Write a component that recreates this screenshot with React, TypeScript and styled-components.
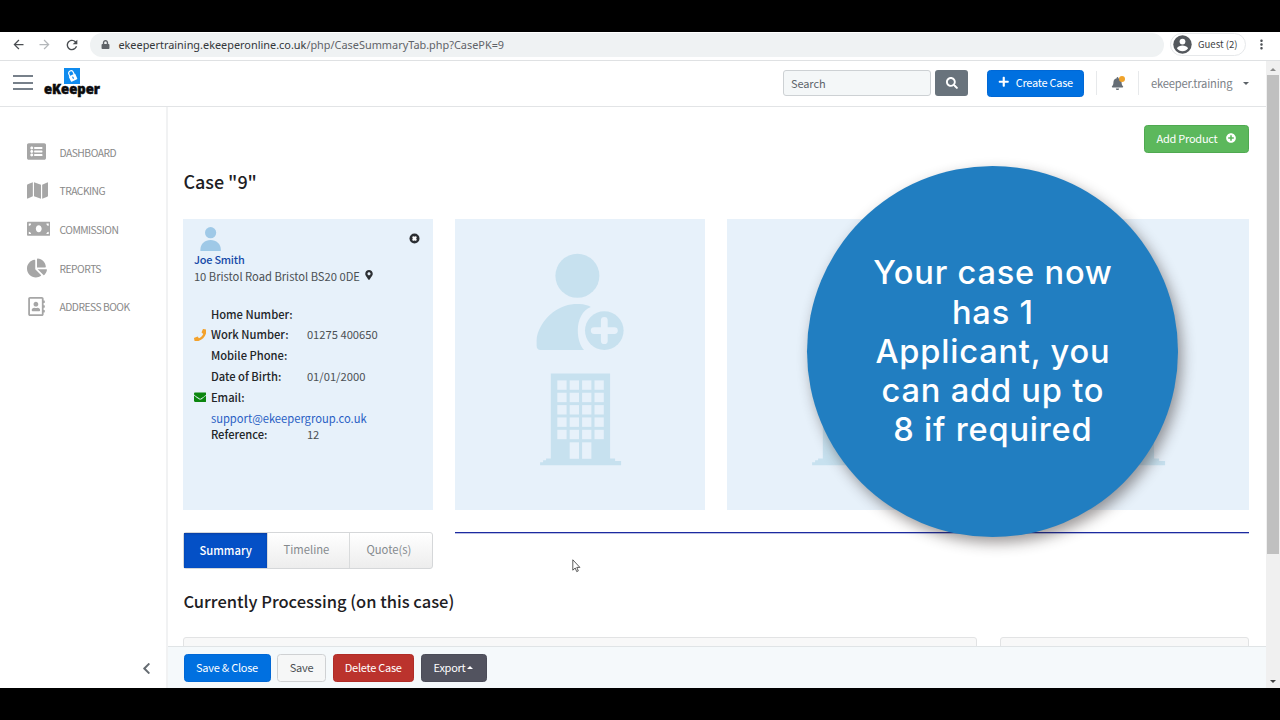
import React from 'react';
import styled, { createGlobalStyle, css } from 'styled-components';
import {
  FaListAlt, FaMap, FaMoneyBill, FaChartPie, FaRegAddressBook, FaSearch, FaPlus, FaBell,
  FaPlusCircle, FaMapMarkerAlt, FaPhone, FaEnvelope, FaChevronLeft, FaLock,
} from 'react-icons/fa';
import { MdArrowBack, MdArrowForward, MdRefresh, MdMoreVert } from 'react-icons/md';

const sans = '"Noto Sans CJK SC", "Noto Sans", sans-serif';

const GlobalStyle = createGlobalStyle`
  *, *::before, *::after { box-sizing: border-box; }
  body { margin: 0; background: #000; font-family: ${sans}; }
  svg { display: block; flex: none; }
`;

const Screen = styled.div`
  position: relative;
  width: 1280px;
  height: 720px;
  padding: 32px 0;
  background: #000;
  overflow: hidden;
  display: flex;
  flex-direction: column;
`;

/* Browser toolbar */
const BrowserBar = styled.div`
  flex: none;
  height: 29px;
  padding: 0 11px 3px 10.5px;
  display: flex;
  align-items: center;
  background: #fff;
  border-bottom: 1px solid #dfe1e3;
  color: #4d5156;
`;
const NavIcon = styled.span<{ $muted?: boolean }>`
  width: 26.8px;
  color: ${(p) => (p.$muted ? '#b4b7ba' : '#4a4e52')};
`;
const AddressBar = styled.div`
  width: 1074px;
  height: 24px;
  margin-left: -1px;
  padding-left: 11px;
  border-radius: 12px;
  background: #eff2f3;
  display: flex;
  align-items: center;
  gap: 8.5px;
  color: #5f6368;
  font: 10.9px/16px "Noto Sans", sans-serif;
  white-space: nowrap;
`;
const Host = styled.span`color: #34373a;`;
const Profile = styled.div`
  width: 76px;
  height: 23px;
  margin-left: 6px;
  padding-left: 2px;
  border: 1px solid #e6e8ea;
  border-radius: 12px;
  display: flex;
  align-items: center;
  gap: 6px;
  font-size: 9.6px;
  line-height: 14px;
  color: #3c4043;
  white-space: nowrap;
  & > span { margin-top: -2px; }
`;
const Kebab = styled.span`margin-left: 8px;`;

/* App shell */
const Viewport = styled.div`flex: 1; min-height: 0; display: flex; background: #fff;`;
const Page = styled.div`width: 1266px; display: flex; flex-direction: column;`;
const Header = styled.header`
  flex: none;
  height: 46px;
  padding: 0 16px 1px 12.5px;
  display: flex;
  align-items: center;
  border-bottom: 1px solid #e2e4e6;
`;
const Burger = styled.div`
  width: 20px;
  height: 15px;
  margin-bottom: 1px;
  display: flex;
  flex-direction: column;
  justify-content: space-between;
  &::before, &::after { content: ''; }
  &::before, &::after, & > i { height: 2px; background: #77808a; }
`;
const Logo = styled.div`
  width: 57px;
  margin: 0 auto 0 11px;
  display: flex;
  flex-direction: column;
  align-items: center;
`;
const LogoText = styled.span`
  margin-top: -4px;
  font: 900 13.1px/18px "Noto Sans", sans-serif;
  color: #0b0b0d;
  -webkit-text-stroke: 0.5px #0b0b0d;
`;
const SearchBox = styled.div`
  width: 148px;
  height: 26px;
  padding-left: 7px;
  border: 1px solid #cdd1d4;
  border-radius: 3px;
  background: #f4f7f8;
  font-size: 11px;
  letter-spacing: -0.1px;
  line-height: 24px;
  color: #5d646a;
`;
const SearchButton = styled.div`
  width: 33px;
  height: 26px;
  margin: 0 19px 0 4px;
  border-radius: 3px;
  background: #69737c;
  color: #fff;
  display: flex;
  align-items: center;
  justify-content: center;
`;
const HeaderGap = styled.span`width: 12px;`;
const HeaderRule = styled.span`width: 1px; height: 24px; background: #e7e9eb;`;
const Bell = styled.div`
  position: relative;
  width: 41px;
  display: flex;
  justify-content: center;
  color: #656d75;
`;
const BellDot = styled.span`
  position: absolute;
  left: 22px;
  top: -1px;
  width: 6px;
  height: 6px;
  border-radius: 50%;
  background: #f0a32b;
`;
const UserMenu = styled.div`
  width: 98px;
  margin: 1px 1px 0 12px;
  display: flex;
  align-items: center;
  justify-content: space-between;
  font-size: 11.2px;
  letter-spacing: -0.2px;
  line-height: 17px;
  color: #7b8187;
`;
const Caret = styled.i<{ $up?: boolean; $color?: string; $size?: number }>`
  display: block;
  width: 0;
  height: 0;
  border: ${(p) => p.$size ?? 3.5}px solid transparent;
  ${(p) =>
    p.$up
      ? css`border-top-width: 0; border-bottom-color: ${p.$color ?? '#fff'};`
      : css`border-bottom-width: 0; border-top-color: ${p.$color ?? '#5c6268'};`}
`;

type Tone = 'primary' | 'light' | 'danger' | 'dark' | 'success';
const tones = {
  primary: css`background: #0070e0; border-color: #0068d6; color: #fff;`,
  light: css`background: #f6f7f7; border-color: #cfd1d3; color: #4b4f53;`,
  danger: css`background: #bb332d; border-color: #b02c27; color: #fff;`,
  dark: css`background: #52535f; border-color: #4b4c58; color: #fff;`,
  success: css`background: #5cb85c; border-color: #4fa950; color: #fff;`,
};
const Button = styled.button<{ $tone: Tone; $width: number; $height?: number }>`
  width: ${(p) => p.$width}px;
  height: ${(p) => p.$height ?? 28}px;
  padding: 0 0 2px;
  border: 1px solid;
  border-radius: 3.5px;
  display: flex;
  align-items: center;
  justify-content: center;
  font: 400 11px/16px ${sans};
  letter-spacing: -0.26px;
  white-space: nowrap;
  ${(p) => tones[p.$tone]}
`;
const IconBefore = styled.span`margin-right: 6px;`;
const IconAfter = styled.span`margin-left: 9px;`;
const CaretAfter = styled.span`margin: 1px 0 0 2px;`;

const Body = styled.div`flex: 1; min-height: 0; display: flex;`;
const Sidebar = styled.nav`
  width: 168px;
  padding: 26.6px 0 0 26.5px;
  border-right: 2px solid #f1f2f3;
  display: flex;
  flex-direction: column;
`;
const NavItem = styled.a`
  height: 38.6px;
  display: flex;
  align-items: center;
  font-size: 10.3px;
  letter-spacing: -0.5px;
  line-height: 16px;
  color: #898989;
`;
const NavGlyph = styled.span`width: 33px; margin-top: -2px; color: #a6a6a6;`;
const Collapse = styled.span`margin: auto 0 13px 113px; color: #666c72;`;

const Main = styled.main`flex: 1; min-width: 0; display: flex; flex-direction: column;`;
const Content = styled.section`
  flex: 1;
  min-height: 0;
  overflow: hidden;
  padding: 18px 17px 0 15.4px;
  display: flex;
  flex-direction: column;
`;
const Actions = styled.div`flex: none; display: flex; justify-content: flex-end;`;
const Title = styled.h1`
  flex: none;
  margin: 15.4px 0 24.6px;
  font-size: 17.95px;
  font-weight: 500;
  line-height: 26px;
  color: #1d2023;
`;
const CardGrid = styled.div`
  flex: none;
  display: grid;
  grid-template-columns: repeat(4, 1fr);
  column-gap: 22.5px;
`;
const Card = styled.article`
  height: 291px;
  background: #e7f1fa;
`;
const ApplicantCard = styled(Card)`
  padding: 8px 13px 0 10.5px;
  font-size: 11.2px;
  line-height: 16.8px;
  color: #4b5054;
`;
const CardTop = styled.div`
  height: 24px;
  padding-left: 6px;
  display: flex;
  justify-content: space-between;
`;
const CloseMark = styled.svg`margin-top: 6px;`;
const Name = styled.div`font-weight: 500; font-size: 10.9px; letter-spacing: -0.2px; color: #1549a8;`;
const Address = styled.div`
  display: flex;
  gap: 4px;
  margin: 0.4px 0 18.6px;
  & > svg { margin-top: 2px; color: #2d3033; }
`;
const Field = styled.div<{ $compact?: boolean }>`
  height: ${(p) => (p.$compact ? 16.8 : 20.8)}px;
  display: grid;
  grid-template-columns: 17px 96px 1fr;
  align-items: center;
`;
const Label = styled.span`grid-column: 2; font-weight: 500; color: #222528;`;
const Value = styled.span`grid-column: 3;`;
const Mail = styled.a`display: block; padding: 2px 0 0 17px; color: #2a5fc4;`;
const EmptyCard = styled(Card)`
  padding: 33px 0 0 80.5px;
  display: flex;
  flex-direction: column;
  gap: 20px;
  & > svg + svg { margin-left: 4px; }
`;

const TabRow = styled.div`
  flex: none;
  margin-top: 22px;
  display: grid;
  grid-template-columns: 249.5px 1fr;
  column-gap: 22.5px;
  align-items: start;
`;
const Tabs = styled.div`
  height: 37px;
  display: grid;
  grid-template-columns: 82.5px 82px 1fr;
  border: 1px solid #d5d7d9;
  border-radius: 3px;
  background: linear-gradient(#fff, #ededed);
`;
const Tab = styled.div<{ $active?: boolean }>`
  padding-right: 4px;
  font-size: 11.25px;
  line-height: 32px;
  text-align: center;
  color: #858a8e;
  & + & { border-left: 1px solid #d9dbdc; }
  & + &:nth-child(2) { padding-right: 1px; border-left: 0; }
  ${(p) =>
    p.$active &&
    css`
      height: 35px;
      padding-right: 0;
      background: #0450c6;
      color: #fff;
      font-weight: 500;
      line-height: 35px;
      box-shadow: inset 0 1px 2px #0b3da0;
    `}
`;
const TabLine = styled.hr`
  width: 100%;
  height: 1px;
  margin: 0;
  border: 0;
  background: #1c2aa0;
  box-shadow: 0 1px rgba(28, 42, 160, 0.3);
`;
const Heading = styled.h2`
  flex: none;
  margin: 20px 0 23px;
  font-size: 16.5px;
  font-weight: 500;
  line-height: 25px;
  color: #1d2023;
`;
const Panels = styled.div`
  flex: none;
  display: grid;
  grid-template-columns: 793.5px 1fr;
  column-gap: 23.2px;
`;
const Panel = styled.div`
  height: 60px;
  border: 1px solid #e2e3e4;
  border-radius: 3px;
  background: #f8f8f8;
`;
const FooterBar = styled.footer`
  flex: none;
  height: 42px;
  padding: 7px 0 0 15.5px;
  border-top: 1px solid #e0e4e6;
  background: #f5f9fb;
  display: flex;
  gap: 6.5px;
`;

const Scrollbar = styled.div`
  width: 14px;
  padding: 7px 1px 5px;
  background: #f0f0f0;
  display: flex;
  flex-direction: column;
  align-items: center;
`;
const Thumb = styled.div`width: 12px; height: 479px; margin: 4px 0 auto; background: #c0c0c0;`;

const Bubble = styled.div`
  position: absolute;
  left: 807.4px;
  top: 166px;
  width: 371px;
  height: 371px;
  border-radius: 50%;
  background: #217ec1;
  box-shadow: 4px 6px 14px rgba(40, 30, 30, 0.45);
  display: flex;
  align-items: center;
  justify-content: center;
  text-align: center;
  font: 500 32.6px/39.3px Inter, sans-serif;
  letter-spacing: 0.8px;
  color: #fff;
`;
const Pointer = styled.svg`position: absolute; left: 572px; top: 559px;`;

const GuestAvatar = () => (
  <svg width="19" height="19" viewBox="0 0 19 19">
    <circle cx="9.5" cy="9.5" r="9.2" fill="#54585d" />
    <circle cx="9.5" cy="6.600" r="2.900" fill="#fff" />
    <path d="M3.900 13.300c1-1.900 3.500-2.700 5.600-2.700s4.600.8 5.600 2.700a6.700 6.700 0 0 1-11.200 0z" fill="#fff" />
  </svg>
);

const PersonIcon = () => (
  <svg width="22" height="25" viewBox="200 227 22 25" fill="#9fc9e7">
    <circle cx="210.6" cy="232.7" r="5.6" />
    <path d="M200.4 251v-1.500c0-5.600 4.400-9.600 10.200-9.600s10.200 4 10.200 9.600v1.500z" />
  </svg>
);

const CloseIcon = () => (
  <CloseMark width="11" height="11" viewBox="0 0 11 11">
    <circle cx="5.500" cy="5.500" r="5" fill="#2b2e32" />
    <path d="M4.400 4.400l2.200 2.200M6.600 4.400l-2.200 2.200" stroke="#fff" strokeWidth="2.200" strokeLinecap="round" />
  </CloseMark>
);

const AddPersonIcon = () => (
  <svg width="90" height="100" viewBox="536 252 90 100" fill="#c7e1ef">
    <circle cx="577.4" cy="275.8" r="22" />
    <path d="M540.5 350c-2.600-.1-3.900-1.700-3.900-4.600v-5c0-9 6.500-20.500 16-28 8.500-6.500 18-8.900 27-8.400 4.500.2 8.600 1.200 11.200 3-8.500 3.500-13 12.500-13 23.500 0 8 2.200 15 6.200 19.500z" />
    <circle cx="604.3" cy="330.6" r="19.3" />
    <path d="M604.3 320.500v20.200M594.200 330.600h20.200" stroke="#e7f1fa" strokeWidth="6.800" strokeLinecap="round" />
  </svg>
);

const BuildingIcon = () => (
  <svg width="82" height="94" viewBox="540 372 82 94" fill="#c7e1ef">
    <path d="M550.800 373.600h59.300v84.900h5v2.500h6v4.300h-81v-3h3v-2h3v-1.800h4.700z" />
    <g fill="#e7f1fa">
      {[0, 1, 2, 3, 4].map((row) =>
        [0, 1, 2, 3].map((col) => (
          <rect key={`${row}-${col}`} x={557.3 + col * 12.4} y={380.4 + row * 12.35} width="9.300" height="9.400" />
        )),
      )}
      <rect x="569.7" y="442.300" width="9.300" height="16.500" />
      <rect x="582.1" y="442.300" width="9.300" height="16.500" />
    </g>
  </svg>
);

/* Blue tile with a tilted padlock */
const LogoMark = () => (
  <svg width="16" height="16" viewBox="0 0 16 16">
    <rect width="16" height="16" fill="#0f8bee" />
    <g transform="rotate(-24 8 8)">
      <rect x="4.800" y="7" width="7" height="6" rx=".6" fill="#fff" />
      <path d="M5.900 7.200V5a2.400 2.400 0 0 1 4.800 0v2.200" fill="none" stroke="#fff" strokeWidth="1.200" />
      <rect x="7.700" y="8.800" width="1.200" height="2.400" rx=".6" fill="#0f8bee" />
    </g>
  </svg>
);

const navItems = [
  { label: 'DASHBOARD', icon: <FaListAlt size={19} /> },
  { label: 'TRACKING', icon: <FaMap size={21} /> },
  { label: 'COMMISSION', icon: <FaMoneyBill size={23.5} /> },
  { label: 'REPORTS', icon: <FaChartPie size={20} /> },
  { label: 'ADDRESS BOOK', icon: <FaRegAddressBook size={19} /> },
];

const fields = [
  { label: 'Home Number:', value: '' },
  { label: 'Work Number:', value: '01275 400650', icon: <FaPhone size={12.5} color="#f3a22c" /> },
  { label: 'Mobile Phone:', value: '' },
  { label: 'Date of Birth:', value: '01/01/2000' },
  { label: 'Email:', value: '', icon: <FaEnvelope size={12.5} color="#0c860f" /> },
];

export default function App() {
  return (
    <>
      <GlobalStyle />
      <Screen>
        <BrowserBar>
          <NavIcon><MdArrowBack size={15} /></NavIcon>
          <NavIcon $muted><MdArrowForward size={15} /></NavIcon>
          <NavIcon><MdRefresh size={16} /></NavIcon>
          <AddressBar>
            <FaLock size={9} />
            <span><Host>ekeepertraining.ekeeperonline.co.uk</Host>/php/CaseSummaryTab.php?CasePK=9</span>
          </AddressBar>
          <Profile><GuestAvatar /><span>Guest (2)</span></Profile>
          <Kebab><MdMoreVert size={15} /></Kebab>
        </BrowserBar>

        <Viewport>
          <Page>
            <Header>
              <Burger><i /></Burger>
              <Logo><LogoMark /><LogoText>eKeeper</LogoText></Logo>
              <SearchBox>Search</SearchBox>
              <SearchButton><FaSearch size={12} /></SearchButton>
              <Button $tone="primary" $width={97} $height={27}>
                <IconBefore><FaPlus size={11.5} /></IconBefore>Create Case
              </Button>
              <HeaderGap />
              <HeaderRule />
              <Bell><FaBell size={13} /><BellDot /></Bell>
              <HeaderRule />
              <UserMenu>ekeeper.training<Caret /></UserMenu>
            </Header>

            <Body>
              <Sidebar>
                {navItems.map((item) => (
                  <NavItem key={item.label}><NavGlyph>{item.icon}</NavGlyph>{item.label}</NavItem>
                ))}
                <Collapse><FaChevronLeft size={13} /></Collapse>
              </Sidebar>

              <Main>
                <Content>
                  <Actions>
                    <Button $tone="success" $width={105}>
                      Add Product<IconAfter><FaPlusCircle size={10} /></IconAfter>
                    </Button>
                  </Actions>
                  <Title>Case "9"</Title>
                  <CardGrid>
                    <ApplicantCard>
                      <CardTop>
                        <PersonIcon />
                        <CloseIcon />
                      </CardTop>
                      <Name>Joe Smith</Name>
                      <Address>10 Bristol Road Bristol BS20 0DE<FaMapMarkerAlt size={10} /></Address>
                      {fields.map((f) => (
                        <Field key={f.label}>{f.icon}<Label>{f.label}</Label><Value>{f.value}</Value></Field>
                      ))}
                      <Mail>support@ekeepergroup.co.uk</Mail>
                      <Field $compact><Label>Reference:</Label><Value>12</Value></Field>
                    </ApplicantCard>
                    {[2, 3, 4].map((slot) => (
                      <EmptyCard key={slot}><AddPersonIcon /><BuildingIcon /></EmptyCard>
                    ))}
                  </CardGrid>
                  <TabRow>
                    <Tabs>
                      <Tab $active>Summary</Tab>
                      <Tab>Timeline</Tab>
                      <Tab>Quote(s)</Tab>
                    </Tabs>
                    <TabLine />
                  </TabRow>
                  <Heading>Currently Processing (on this case)</Heading>
                  <Panels><Panel /><Panel /></Panels>
                </Content>
                <FooterBar>
                  <Button $tone="primary" $width={87}>Save &amp; Close</Button>
                  <Button $tone="light" $width={49}>Save</Button>
                  <Button $tone="danger" $width={81.5}>Delete Case</Button>
                  <Button $tone="dark" $width={66}>Export<CaretAfter><Caret $up $size={3} /></CaretAfter></Button>
                </FooterBar>
              </Main>
            </Body>
          </Page>
          <Scrollbar>
            <Caret $up $size={3} $color="#8b8b8b" />
            <Thumb />
            <Caret $size={3} $color="#404040" />
          </Scrollbar>
        </Viewport>

        <Bubble>
          Your case now<br />has 1<br />Applicant, you<br />can add up to<br />8 if required
        </Bubble>
        <Pointer width="9" height="14" viewBox="0 0 9 14">
          <path d="M.8.8v10.400l2.400-2.200 1.500 3.600 1.600-.7-1.500-3.500h3.100z" fill="#fff" stroke="#333" strokeWidth=".8" />
        </Pointer>
      </Screen>
    </>
  );
}
